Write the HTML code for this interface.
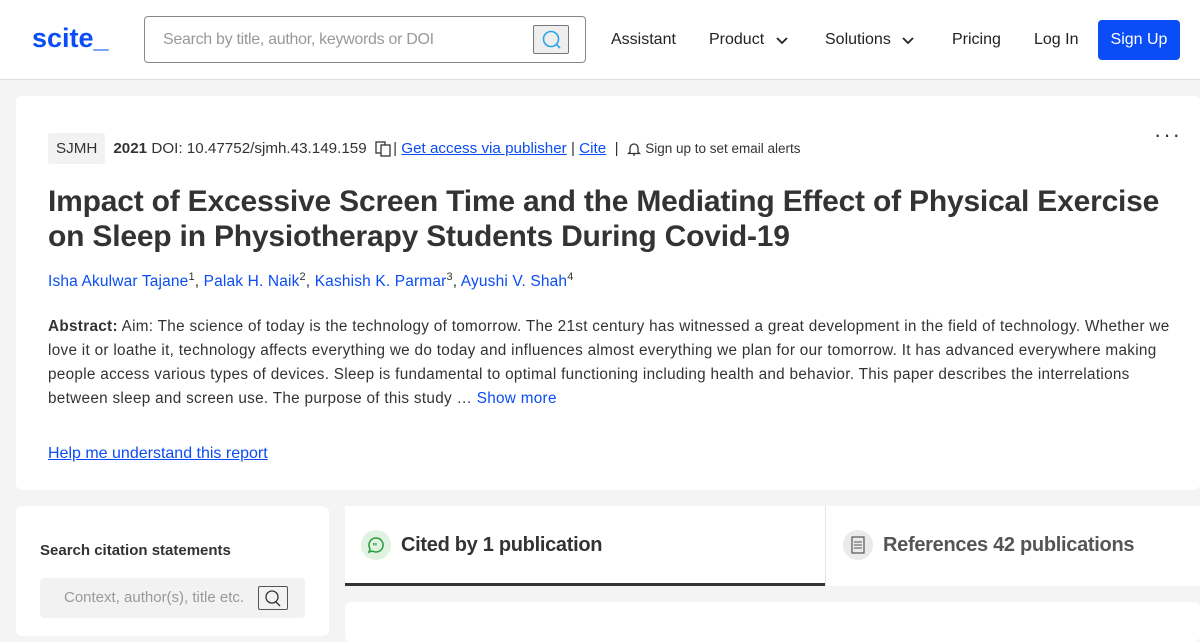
<!DOCTYPE html>
<html><head><style>
*{box-sizing:border-box;margin:0;padding:0}
body{width:1200px;height:630px;overflow:hidden;background:#f4f4f4;font-family:"Liberation Sans",sans-serif;color:#333;position:relative}
.hdr{position:absolute;left:0;top:0;width:1200px;height:80px;background:#fff;border-bottom:1px solid #ddd}
.logo{position:absolute;left:32px;top:23px;font-size:27px;font-weight:bold;color:#0a4cf5;letter-spacing:0}
.search{position:absolute;left:144px;top:16px;width:442px;height:47px;border:1px solid #888;border-radius:4px}
.search span{position:absolute;left:18px;top:14px;color:#999;font-size:16px;letter-spacing:-0.3px}
.sbtn{position:absolute;left:388px;top:8px;width:36px;height:29px;border:1px solid #777;border-radius:2px;background:#eee}
.nav{position:absolute;top:31px;font-size:16px;color:#222}
.signup{position:absolute;left:1098px;top:20px;width:82px;height:40px;background:#0a4cf5;border-radius:4px;color:#fff;font-size:16px;text-align:center;line-height:40px}
.card{position:absolute;left:16px;top:96px;width:1184px;height:394px;background:#fff;border-radius:6px}
.meta{position:absolute;left:48px;top:133px;font-size:15.2px;color:#333;white-space:nowrap;display:flex;align-items:center}
.tag{background:#f2f2f2;border-radius:3px;padding:7px 8px;margin-right:8px}
a{color:#0a4cf5;text-decoration:underline}
h1{position:absolute;left:48px;top:184px;font-size:30px;line-height:35px;font-weight:bold;color:#333;width:1130px;letter-spacing:-0.2px}
.auth{position:absolute;left:48px;top:271px;font-size:15.5px;color:#0a4cf5;letter-spacing:0.15px}
.auth sup{color:#333;font-size:11px}
.abs{position:absolute;left:48px;top:315px;width:1130px;font-size:15.3px;line-height:24px;color:#333;letter-spacing:0.3px}
.help{position:absolute;left:48px;top:445px;font-size:16px}
.side{position:absolute;left:16px;top:506px;width:313px;height:130px;background:#fff;border-radius:6px}
.tab1{position:absolute;left:345px;top:506px;width:480px;height:80px;background:#fff;border-bottom:3px solid #333}
.tab2{position:absolute;left:825px;top:506px;width:375px;height:80px;background:#fff;border-left:1px solid #e5e5e5}
.panel{position:absolute;left:345px;top:602px;width:855px;height:40px;background:#fff;border-radius:6px}
</style></head><body>
<div class="hdr">
<div class="logo">scite_</div>
<div class="search"><span>Search by title, author, keywords or DOI</span>
<div class="sbtn"><svg width="36" height="29"><circle cx="17" cy="13" r="7.5" fill="none" stroke="#2aa5e8" stroke-width="1.6"/><line x1="22.5" y1="18.5" x2="26" y2="22" stroke="#2aa5e8" stroke-width="1.6"/></svg></div></div>
<div class="nav" style="left:611px">Assistant</div>
<div class="nav" style="left:709px">Product</div>
<svg style="position:absolute;left:775px;top:36px" width="14" height="10"><path d="M2 2l5 5 5-5" fill="none" stroke="#222" stroke-width="1.8"/></svg>
<div class="nav" style="left:825px">Solutions</div>
<svg style="position:absolute;left:901px;top:36px" width="14" height="10"><path d="M2 2l5 5 5-5" fill="none" stroke="#222" stroke-width="1.8"/></svg>
<div class="nav" style="left:952px">Pricing</div>
<div class="nav" style="left:1034px">Log In</div>
<div class="signup">Sign Up</div>
</div>
<div class="card"></div>
<div style="position:absolute;left:1154px;top:122px;font-size:22px;letter-spacing:2px;color:#333">···</div>
<div class="meta"><span class="tag">SJMH</span><b>2021</b>&nbsp;DOI: 10.47752/sjmh.43.149.159&nbsp;&nbsp;
<svg width="18" height="16"><rect x="1" y="1" width="9" height="11" fill="none" stroke="#333" stroke-width="1.3"/><rect x="6" y="4" width="9" height="11" fill="#fff" stroke="#333" stroke-width="1.3"/></svg>|&nbsp;<a href="#">Get access via publisher</a>&nbsp;|&nbsp;<a href="#">Cite</a>&nbsp;&nbsp;|&nbsp;&nbsp;
<svg width="14" height="16"><path d="M3 11V7a4 4 0 0 1 8 0v4l1.5 1.5h-11z M6 14h2" fill="none" stroke="#333" stroke-width="1.3"/></svg>&nbsp;<span style="font-size:13.5px">Sign up to set email alerts</span></div>
<h1>Impact of Excessive Screen Time and the Mediating Effect of Physical Exercise on Sleep in Physiotherapy Students During Covid-19</h1>
<div class="auth">Isha Akulwar Tajane<sup>1</sup><span style="color:#333">, </span>Palak H. Naik<sup>2</sup><span style="color:#333">, </span>Kashish K. Parmar<sup>3</sup><span style="color:#333">, </span>Ayushi V. Shah<sup>4</sup></div>
<div class="abs"><b>Abstract:</b> Aim: The science of today is the technology of tomorrow. The 21st century has witnessed a great development in the field of technology. Whether we love it or loathe it, technology affects everything we do today and influences almost everything we plan for our tomorrow. It has advanced everywhere making people access various types of devices. Sleep is fundamental to optimal functioning including health and behavior. This paper describes the interrelations between sleep and screen use. The purpose of this study … <span style="color:#0a4cf5">Show more</span></div>
<div class="help"><a href="#">Help me understand this report</a></div>
<div class="side">
<div style="position:absolute;left:24px;top:36px;font-size:15px;font-weight:bold;color:#333">Search citation statements</div>
<div style="position:absolute;left:24px;top:72px;width:265px;height:40px;background:#f2f2f2;border-radius:4px">
<span style="position:absolute;left:24px;top:11px;color:#999;font-size:15px">Context, author(s), title etc.</span>
<div style="position:absolute;left:218px;top:8px;width:30px;height:24px;border:1px solid #555;border-radius:2px"><svg width="30" height="24"><circle cx="13" cy="10" r="6" fill="none" stroke="#333" stroke-width="1.3"/><line x1="17" y1="15" x2="21" y2="19" stroke="#333" stroke-width="1.3"/></svg></div></div>
</div>
<div class="tab1">
<div style="position:absolute;left:16px;top:24px;width:30px;height:30px;border-radius:50%;background:#dff3e0"><svg width="30" height="30"><path d="M15 8a7 7 0 1 1-3.5 13l-3.5 1 1-3.3A7 7 0 0 1 15 8z" fill="none" stroke="#2b9a3a" stroke-width="1.5"/><text x="11.5" y="20" font-size="10" font-weight="bold" fill="#2b9a3a" font-family="Liberation Sans">"</text></svg></div>
<div style="position:absolute;left:56px;top:28px;font-size:20px;font-weight:bold;color:#333;letter-spacing:-0.3px">Cited by 1 publication</div></div>
<div class="tab2">
<div style="position:absolute;left:17px;top:24px;width:30px;height:30px;border-radius:50%;background:#eaeaea"><svg width="30" height="30"><rect x="9" y="7" width="12" height="16" fill="none" stroke="#555" stroke-width="1.2"/><line x1="11" y1="12" x2="19" y2="12" stroke="#555"/><line x1="11" y1="15" x2="19" y2="15" stroke="#555"/><line x1="11" y1="18" x2="19" y2="18" stroke="#555"/></svg></div>
<div style="position:absolute;left:57px;top:28px;font-size:20px;font-weight:bold;color:#555;letter-spacing:-0.3px">References 42 publications</div></div>
<div class="panel"></div>
</body></html>
